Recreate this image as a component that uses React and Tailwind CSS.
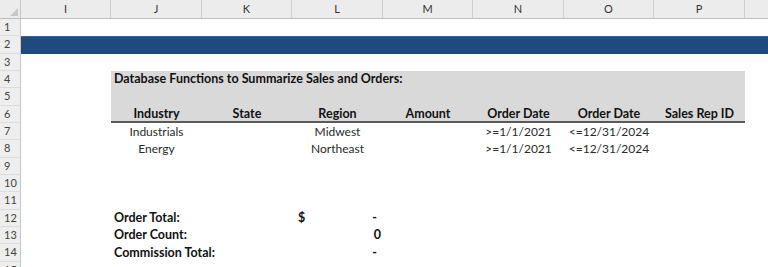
import React from "react";

const COLS = ["I", "J", "K", "L", "M", "N", "O", "P"];
const WIDTHS = ["w-[90px]", "w-[91px]", "w-[90px]", "w-[91px]", "w-[90px]", "w-[91px]", "w-[90px]", "w-[91px]"];
const HEIGHTS = ["h-[17px]", "h-[18px]", "h-[17px]", "h-[17px]", "h-[18px]", "h-[17px]", "h-[17px]", "h-[18px]", "h-[17px]", "h-[17px]", "h-[18px]", "h-[17px]", "h-[17px]", "h-[18px]", "h-[17px]"];

function Cell({ i, className = "", children }) {
  return (
    <div className={`${WIDTHS[i]} shrink-0 h-full flex items-center ${className}`}>
      {children}
    </div>
  );
}

function Row({ n, children, band = false }) {
  return (
    <div className={`flex ${HEIGHTS[n - 1]}`}>
      <div className="w-[21px] shrink-0 h-full bg-[#eeeeee] border-r border-[#c6c6c6] border-b border-b-[#dcdcdc] flex items-center pl-[4px] text-[11px] text-[#444]">
        {n}
      </div>
      <div className={`flex-1 flex h-full ${band ? "bg-[#1f4a7c] border-t border-[#3a6597]" : "bg-white"}`}>
        {children}
      </div>
    </div>
  );
}

const gray = "bg-[#d9d9d9]";
const bold = "font-bold text-[12.5px] text-[#111]";
const body = "text-[12px] text-[#2a2a2a]";

export default function App() {
  const empty = (from = 0) => COLS.slice(from).map((c, k) => <Cell key={c} i={k + from} />);
  return (
    <div
      className="w-[768px] h-[267px] overflow-hidden bg-white text-[#222]"
      style={{ fontFamily: "Lato, 'Open Sans', sans-serif" }}
    >
      {/* header */}
      <div className="flex h-[19px] bg-[#ececec] border-b border-[#bcbcbc]">
        <div className="w-[21px] shrink-0 h-full border-r border-[#c6c6c6] relative">
          <svg className="absolute right-[2px] bottom-[2px]" width="8" height="8" viewBox="0 0 8 8">
            <polygon points="8,0 8,8 0,8" fill="#c8c8c8" />
          </svg>
        </div>
        {COLS.map((c, i) => (
          <div key={c} className={`${WIDTHS[i]} shrink-0 h-full border-r border-[#d0d0d0] flex items-center justify-center text-[11px] text-[#333]`}>
            {c}
          </div>
        ))}
        <div className="flex-1" />
      </div>

      <Row n={1}>{empty()}</Row>
      <Row n={2} band>{null}</Row>
      <Row n={3}>{empty()}</Row>
      <Row n={4}>
        <Cell i={0} />
        <Cell i={1} className={`${gray} pl-[3px]`}>
          <span className={`whitespace-nowrap relative z-10 ${bold}`}>
            Database Functions to Summarize Sales and Orders:
          </span>
        </Cell>
        {COLS.slice(2).map((c, k) => <Cell key={c} i={k + 2} className={gray} />)}
      </Row>
      <Row n={5}>
        <Cell i={0} />
        {COLS.slice(1).map((c, k) => <Cell key={c} i={k + 1} className={gray} />)}
      </Row>
      <Row n={6}>
        <Cell i={0} />
        {["Industry", "State", "Region", "Amount", "Order Date", "Order Date", "Sales Rep ID"].map((t, k) => (
          <Cell key={k} i={k + 1} className={`${gray} justify-center border-b-[2px] border-[#5a5a5a] pt-[2px] ${bold}`}>
            {t}
          </Cell>
        ))}
      </Row>
      <Row n={7}>
        <Cell i={0} />
        <Cell i={1} className={`justify-center ${body}`}>Industrials</Cell>
        <Cell i={2} />
        <Cell i={3} className={`justify-center ${body}`}>Midwest</Cell>
        <Cell i={4} />
        <Cell i={5} className={`justify-center ${body}`}>&gt;=1/1/2021</Cell>
        <Cell i={6} className={`justify-center ${body}`}>&lt;=12/31/2024</Cell>
        <Cell i={7} />
      </Row>
      <Row n={8}>
        <Cell i={0} />
        <Cell i={1} className={`justify-center ${body}`}>Energy</Cell>
        <Cell i={2} />
        <Cell i={3} className={`justify-center ${body}`}>Northeast</Cell>
        <Cell i={4} />
        <Cell i={5} className={`justify-center ${body}`}>&gt;=1/1/2021</Cell>
        <Cell i={6} className={`justify-center ${body}`}>&lt;=12/31/2024</Cell>
        <Cell i={7} />
      </Row>
      <Row n={9}>{empty()}</Row>
      <Row n={10}>{empty()}</Row>
      <Row n={11}>{empty()}</Row>
      <Row n={12}>
        <Cell i={0} />
        <Cell i={1} className="pl-[3px]">
          <span className={`whitespace-nowrap ${bold}`}>Order Total:</span>
        </Cell>
        <Cell i={2} />
        <Cell i={3} className={`justify-between pl-[6px] pr-[6px] ${bold}`}>
          <span>$</span>
          <span>-</span>
        </Cell>
        {empty(4)}
      </Row>
      <Row n={13}>
        <Cell i={0} />
        <Cell i={1} className="pl-[3px]">
          <span className={`whitespace-nowrap ${bold}`}>Order Count:</span>
        </Cell>
        <Cell i={2} />
        <Cell i={3} className={`justify-end pr-[2px] ${bold}`}>0</Cell>
        {empty(4)}
      </Row>
      <Row n={14}>
        <Cell i={0} />
        <Cell i={1} className="pl-[3px]">
          <span className={`whitespace-nowrap ${bold}`}>Commission Total:</span>
        </Cell>
        <Cell i={2} />
        <Cell i={3} className={`justify-end pr-[6px] ${bold}`}>-</Cell>
        {empty(4)}
      </Row>
      <Row n={15}>{empty()}</Row>
    </div>
  );
}
